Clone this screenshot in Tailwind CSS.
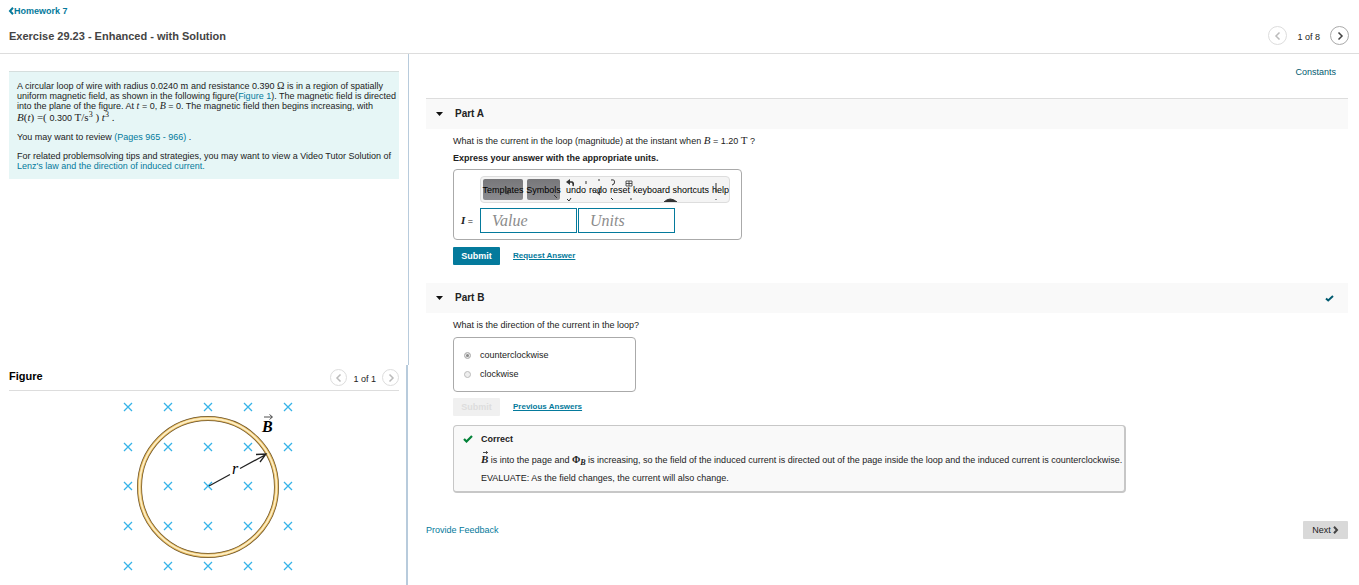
<!DOCTYPE html>
<html lang="en">

<head>
  <meta charset="UTF-8" />
  <meta name="viewport" content="width=device-width, initial-scale=1.0" />
  <title>Exercise 29.23 - Enhanced - with Solution</title>
  <script src="https://cdn.jsdelivr.net/npm/@tailwindcss/browser@4"></script>
</head>

<body class="flex h-screen flex-col overflow-hidden bg-white font-['Liberation_Sans',Arial,sans-serif] text-[9px] leading-[10px] text-[#222]">
  <!-- Header -->
  <header class="flex shrink-0 items-end justify-between border-b border-[#ddd] pt-1.5 pr-2.5 pb-2 pl-2">
    <div>
      <a href="#" class="flex items-center font-bold text-[#047a9c]">
        <svg class="h-2 w-1.5" viewBox="0 0 6 8" fill="none" stroke="currentColor" stroke-width="2"><path d="M5 .8 2 4l3 3.200" /></svg>
        Homework 7
      </a>
      <h1 class="mt-3 mb-px pl-px text-[11px] leading-4 font-bold text-[#444]">Exercise 29.23 - Enhanced - with Solution</h1>
    </div>
    <nav class="flex items-center gap-2.5">
      <button aria-label="Previous item" class="flex size-[19px] items-center justify-center rounded-full border border-[#ddd] text-[#bbb]">
        <svg class="size-2" viewBox="0 0 8 8" fill="none" stroke="currentColor" stroke-width="1.500"><path d="M5.500 .5 2 4l3.500 3.500" /></svg>
      </button>
      <span class="pt-0.5">1 of 8</span>
      <button aria-label="Next item" class="flex size-[19px] items-center justify-center rounded-full border border-[#aaa] text-[#444]">
        <svg class="size-2" viewBox="0 0 8 8" fill="none" stroke="currentColor" stroke-width="1.500"><path d="M2.500 .5 6 4 2.500 7.500" /></svg>
      </button>
    </nav>
  </header>

  <div class="flex min-h-0 grow">
    <!-- Problem and figure -->
    <aside class="flex w-[409px] shrink-0 flex-col">
      <div class="h-[311px] shrink-0 border-r border-[#b8cbdc] pt-[17px] pr-[9px] pl-[9px]">
        <div class="border-t border-[#d5dedd] bg-[#e6f6f6] pt-[9px] pb-2 pl-2 whitespace-nowrap">
          <p>A circular loop of wire with radius 0.0240 <span class="font-['Liberation_Serif',serif] text-[10px] leading-none">m</span> and resistance 0.390 <span class="font-['Liberation_Serif',serif] text-[10px] leading-none">Ω</span> is in a region of spatially<br />
            uniform magnetic field, as shown in the following figure(<a href="#" class="text-[#047a9c]">Figure 1</a>). The magnetic field is directed<br />
            into the plane of the figure. At <i class="font-['Liberation_Serif',serif] text-[10px] leading-none">t</i> = 0, <i class="font-['Liberation_Serif',serif] text-[10px] leading-none">B</i> = 0. The magnetic field then begins increasing, with</p>
          <p class="font-['Liberation_Serif',serif] text-[11px] leading-3"><i>B</i>(<i>t</i>) =( <span class="font-['Liberation_Sans',Arial,sans-serif] text-[9px]">0.300</span> T/s<sup class="text-[8px]">3</sup> ) <i>t</i><sup class="text-[8px]">3</sup> .</p>
          <p class="mt-2">You may want to review <a href="#" class="text-[#047a9c]">(Pages 965 - 966)</a> .</p>
          <p class="mt-[9px]">For related problemsolving tips and strategies, you may want to view a Video Tutor Solution of<br />
            <a href="#" class="text-[#047a9c]">Lenz's law and the direction of induced current.</a></p>
        </div>
      </div>

      <div class="mr-px grow border-r-2 border-[#b8cbdc] pr-[7px] pl-[9px]">
        <div class="flex items-center justify-between border-b border-[#ddd] pb-1">
          <h2 class="text-[11px] leading-[18px] font-bold text-black">Figure</h2>
          <nav class="flex items-center gap-1.5 pt-1">
            <button aria-label="Previous figure" class="flex size-[17px] items-center justify-center rounded-full border border-[#ddd] text-[#bbb]">
              <svg class="size-2" viewBox="0 0 8 8" fill="none" stroke="currentColor" stroke-width="1.500"><path d="M5.500 .5 2 4l3.500 3.500" /></svg>
            </button>
            <span class="pt-0.5">1 of 1</span>
            <button aria-label="Next figure" class="flex size-[17px] items-center justify-center rounded-full border border-[#ddd] text-[#bbb]">
              <svg class="size-2" viewBox="0 0 8 8" fill="none" stroke="currentColor" stroke-width="1.500"><path d="M2.500 .5 6 4 2.500 7.500" /></svg>
            </button>
          </nav>
        </div>

        <!-- Wire loop in a field that points into the page -->
        <svg class="mt-1 ml-[101px] block h-[190px] w-[200px]" viewBox="0 0 200 190" role="img" aria-label="Circular loop of radius r in field B">
          <defs>
            <path id="x" d="M-4-4 4 4M4-4-4 4" stroke="#37b3e8" stroke-width="1.300" />
            <g id="row">
              <use href="#x" x="18" /><use href="#x" x="58" /><use href="#x" x="98" /><use href="#x" x="138" /><use href="#x" x="178" />
            </g>
          </defs>
          <use href="#row" y="12" />
          <use href="#row" y="52" />
          <use href="#row" y="91" />
          <use href="#row" y="131" />
          <use href="#row" y="171" />
          <g fill="none">
            <circle cx="98" cy="92" r="68.500" stroke="#6b5228" stroke-width="5" />
            <circle cx="98" cy="92" r="68.500" stroke="#e5b95e" stroke-width="3.600" />
            <circle cx="98" cy="92" r="68.500" stroke="#fdeec4" stroke-width="1.800" />
            <path d="M99 91 120 79.500M130 73.500 155 60M146 59.500l10-.5-6 8" stroke="#222" stroke-width="1.300" />
            <path d="M154 22h8m-2.500-2.500L162.500 22l-3 2.500" stroke="#222" stroke-width=".8" />
          </g>
          <text x="122" y="79" font-family="Liberation Serif, serif" font-size="16" font-style="italic">r</text>
          <text x="152" y="37" font-family="Liberation Serif, serif" font-size="16" font-style="italic" font-weight="bold">B</text>
        </svg>
      </div>
    </aside>

    <!-- Answer parts -->
    <main class="min-w-0 grow pr-[11px] pl-[17px]">
      <div class="flex justify-end pt-[13px] pr-3">
        <a href="#" class="text-[#005a70]">Constants</a>
      </div>

      <section class="mt-[21px]">
        <div class="flex h-[31px] items-center gap-3 border-t border-[#ddd] bg-[#f9f9f9] pl-2.5">
          <svg class="h-1 w-[7px]" viewBox="0 0 7 4"><path d="M0 0h7L3.500 4z" fill="#111" /></svg>
          <h2 class="text-[10px] font-bold">Part A</h2>
        </div>
        <div class="pt-1.5 pl-[27px]">
          <p>What is the current in the loop (magnitude) at the instant when <i class="font-['Liberation_Serif',serif] text-[11px] leading-none">B</i> = 1.20 <span class="font-['Liberation_Serif',serif] text-[11px] leading-none">T</span> ?</p>
          <p class="mt-[7px] font-bold">Express your answer with the appropriate units.</p>
          <div class="mt-1.5 w-[289px] rounded-sm border border-[#aaa] px-[5px] pt-1.5 pb-1.5">
            <div class="relative ml-[21px] flex h-[27px] w-[250px] items-center gap-[3px] rounded-sm border border-[#ddd] bg-[#f4f4f4] px-0.5 whitespace-nowrap text-black">
              <button class="mr-px flex h-[21px] w-10 items-center justify-center rounded-xs bg-linear-to-b from-[#77777a] to-[#8b8b8f]">Templates</button>
              <button class="mr-px flex h-[21px] w-[33px] items-center justify-center rounded-xs bg-linear-to-b from-[#77777a] to-[#8b8b8f]">Symbols</button>
              <button class="ml-0.5">undo</button>
              <button>redo</button>
              <button>reset</button>
              <button>keyboard shortcuts</button>
              <button>help</button>
              <!-- Toolbar glyphs drawn over the labels -->
              <svg class="pointer-events-none absolute inset-0 h-[25px] w-[248px]" viewBox="0 0 248 25" fill="none" stroke="#333">
                <path d="M25 10v6M24 16l4 1M28 12l-1 4M73 18l3 3" />
                <path d="M87 5h4q2 1 1 4" stroke-width="1.500" />
                <path d="m85 5 4-3v6z" fill="#333" stroke="none" />
                <path d="M86 22l2 2M90 21l-2 3M105 4v3M117 3h2M114 14l5 4M119 11l-1 6" />
                <path d="M130 3q5-1 3 4l-2 1M130 21l2 2M150 21v2" />
                <path d="M145 4h6v5h-6zM145 6.500h6M148 4v5" stroke-width=".8" />
                <path d="M183 25q6-6 13 0z" fill="#333" />
                <path d="M235 6v9M235 22v1" />
              </svg>
            </div>
            <div class="mt-[5px] flex items-center gap-px">
              <label for="value" class="w-5 pl-0.5 whitespace-nowrap"><i class="font-['Liberation_Serif',serif] text-[11px] font-bold">I</i> =</label>
              <input type="text" id="value" placeholder="Value" class="h-[25px] w-[97px] border border-[#047a9c] px-[11px] font-['Liberation_Serif',serif] text-base italic placeholder:text-[#8c8c8c]" />
              <input type="text" id="units" aria-label="Units" placeholder="Units" class="h-[25px] w-[97px] border border-[#047a9c] px-[11px] font-['Liberation_Serif',serif] text-base italic placeholder:text-[#8c8c8c]" />
            </div>
          </div>
          <div class="mt-[7px] flex items-center gap-[13px]">
            <button class="h-[18px] w-[47px] rounded-[1px] bg-[#047a9c] font-bold text-white">Submit</button>
            <a href="#" class="text-[8px] font-bold text-[#047a9c] underline">Request Answer</a>
          </div>
        </div>
      </section>

      <section class="mt-[18px]">
        <div class="flex h-[30px] items-center gap-3 bg-[#f9f9f9] pr-3.5 pl-2.5">
          <svg class="h-1 w-[7px]" viewBox="0 0 7 4"><path d="M0 0h7L3.500 4z" fill="#111" /></svg>
          <h2 class="text-[10px] font-bold">Part B</h2>
          <svg class="ml-auto h-[7px] w-[9px]" viewBox="0 0 9 7" fill="none" stroke="#005a70" stroke-width="2"><path d="m1 3.500 2.200 2L8 1" /></svg>
        </div>
        <div class="pt-[7px] pl-[27px]">
          <p>What is the direction of the current in the loop?</p>
          <div class="mt-[7px] flex w-[183px] flex-col gap-[9px] rounded-sm border border-[#aaa] px-2.5 py-3">
            <label for="ccw" class="flex items-center gap-[9px]">
              <input type="radio" id="ccw" name="direction" checked disabled class="size-[7px] appearance-none rounded-full border border-[#bbb] bg-[#888] shadow-[inset_0_0_0_1px_#eee]" />
              counterclockwise
            </label>
            <label for="cw" class="flex items-center gap-[9px]">
              <input type="radio" id="cw" name="direction" disabled class="size-[7px] appearance-none rounded-full border border-[#bbb] bg-[#eee]" />
              clockwise
            </label>
          </div>
          <div class="mt-1.5 flex items-center gap-[13px]">
            <button disabled class="h-[18px] w-[47px] rounded-[1px] bg-[#f0f0f0] font-bold text-[#ddd]">Submit</button>
            <a href="#" class="text-[8px] font-bold text-[#047a9c] underline">Previous Answers</a>
          </div>

          <div class="mt-[9px] w-fit rounded-sm border border-r-2 border-b-2 border-[#c7c7c7] bg-[#f9f9f9] pt-2 pr-0.5 pb-2 pl-[9px]">
            <div class="flex items-center gap-2">
              <svg class="h-2 w-2.5" viewBox="0 0 10 8" fill="none" stroke="#038238" stroke-width="2.200"><path d="m1 4 2.500 2.500L9 1" /></svg>
              <h3 class="font-bold">Correct</h3>
            </div>
            <div class="pl-[18px]">
              <p class="mt-2.5 whitespace-nowrap"><span class="relative font-['Liberation_Serif',serif] text-[11px] leading-none font-bold italic">B<svg class="absolute -top-0.5 left-0.5 h-[3px] w-[5px]" viewBox="0 0 5 3" fill="none" stroke="#222" stroke-width=".8"><path d="M0 1.500h4.500M3 .2l1.600 1.300L3 2.800" /></svg></span> is into the page and <span class="font-['Liberation_Serif',serif] text-[10px] leading-none font-bold">Φ<sub class="text-[8px] italic">B</sub></span> is increasing, so the field of the induced current is directed out of the page inside the loop and the induced current is counterclockwise.</p>
              <p class="mt-2">EVALUATE: As the field changes, the current will also change.</p>
            </div>
          </div>
        </div>
      </section>

      <footer class="mt-7 flex items-center justify-between">
        <a href="#" class="text-[#047a9c]">Provide Feedback</a>
        <button class="flex h-[18px] w-[45px] items-center justify-center gap-0.5 rounded-[1px] bg-[#d9d9d9]">
          Next
          <svg class="h-2 w-1.5" viewBox="0 0 6 8" fill="none" stroke="#444" stroke-width="2"><path d="M1 .8 4 4 1 7.200" /></svg>
        </button>
      </footer>
    </main>
  </div>
</body>

</html>
